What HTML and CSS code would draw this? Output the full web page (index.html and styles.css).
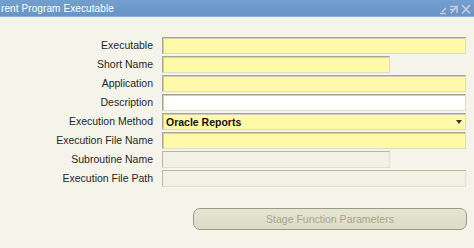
FILE: index.html
```html
<!DOCTYPE html>
<html>
<head>
<meta charset="utf-8">
<link rel="stylesheet" href="styles.css">
</head>
<body>
<div class="window">
  <div class="titlebar">
    <span class="title">rent Program Executable</span>
    <div class="controls">
      <svg width="34" height="12" viewBox="0 0 34 12">
        <path d="M1 10.5 H7 M3 9 L7 5" stroke="#c3ccd8" stroke-width="1.6" fill="none"/>
        <path d="M11 3.5 H18 V10 M11 6.5 H15 M17.5 4 L12 10" stroke="#c3ccd8" stroke-width="1.6" fill="none"/>
        <path d="M23 2 L31 10.5 M31 2 L23 10.5" stroke="#c3ccd8" stroke-width="1.8" fill="none"/>
      </svg>
    </div>
  </div>
  <div class="form">
    <label class="lbl">Executable</label>
    <div class="field req wide"></div>
    <label class="lbl">Short Name</label>
    <div class="field req short"></div>
    <label class="lbl">Application</label>
    <div class="field req wide"></div>
    <label class="lbl">Description</label>
    <div class="field white wide"></div>
    <label class="lbl">Execution Method</label>
    <div class="field req wide select"><span class="val">Oracle Reports</span><span class="arrow"></span></div>
    <label class="lbl">Execution File Name</label>
    <div class="field req wide"></div>
    <label class="lbl">Subroutine Name</label>
    <div class="field dis short"></div>
    <label class="lbl">Execution File Path</label>
    <div class="field dis wide"></div>
  </div>
  <div class="actions">
    <button class="btn" disabled>Stage Function Parameters</button>
  </div>
</div>
</body>
</html>
```
FILE: styles.css
```css
html, body {
  margin: 0;
  padding: 0;
  background: #f4f4ea;
  font-family: "Liberation Sans", Arial, sans-serif;
}
.window {
  width: 474px;
  height: 248px;
  overflow: hidden;
  background: #f4f4ea;
}
.titlebar {
  height: 16px;
  background: linear-gradient(#74a0d0, #6894c6);
  border-bottom: 1px solid #8fb0d4;
  display: flex;
  align-items: center;
  justify-content: space-between;
}
.title {
  color: #ffffff;
  font-size: 10px;
  padding-left: 1px;
  letter-spacing: 0.1px;
}
.controls {
  display: flex;
  align-items: center;
  padding-right: 1px;
  padding-top: 1px;
}
.controls svg { display: block; }
.form {
  display: grid;
  grid-template-columns: 153px 304px;
  column-gap: 9px;
  row-gap: 2px;
  grid-auto-rows: 17px;
  padding-top: 20px;
}
.lbl {
  font-size: 10.5px;
  color: #262626;
  text-align: right;
  line-height: 17px;
  white-space: nowrap;
}
.field {
  box-sizing: border-box;
  height: 17px;
  border: 1px solid;
  border-color: #aaa78a #dedcc6 #dedcc6 #aaa78a;
  box-shadow: inset 1px 1px 0 #cfcdb2;
}
.wide { width: 304px; }
.short { width: 228px; }
.req { background: #fff9a8; }
.white { background: #ffffff; }
.dis {
  background: #f1f1e5;
  border-color: #b9b7a0 #e2e0cc #e2e0cc #b9b7a0;
  box-shadow: none;
}
.select {
  display: flex;
  align-items: center;
  justify-content: space-between;
}
.val {
  font-size: 10.5px;
  font-weight: bold;
  color: #111;
  padding-left: 3px;
}
.arrow {
  width: 0;
  height: 0;
  border-left: 3px solid transparent;
  border-right: 3px solid transparent;
  border-top: 4px solid #333;
  margin-right: 3px;
}
.actions {
  padding-top: 21px;
  padding-left: 193px;
}
.btn {
  box-sizing: border-box;
  width: 274px;
  height: 22px;
  border: 1px solid #9c9a86;
  border-radius: 7px;
  background: linear-gradient(#e6e5d2, #dddcc6);
  color: #a8a58d;
  font-family: "Liberation Sans", Arial, sans-serif;
  font-size: 10.5px;
  padding: 0;
}
```
